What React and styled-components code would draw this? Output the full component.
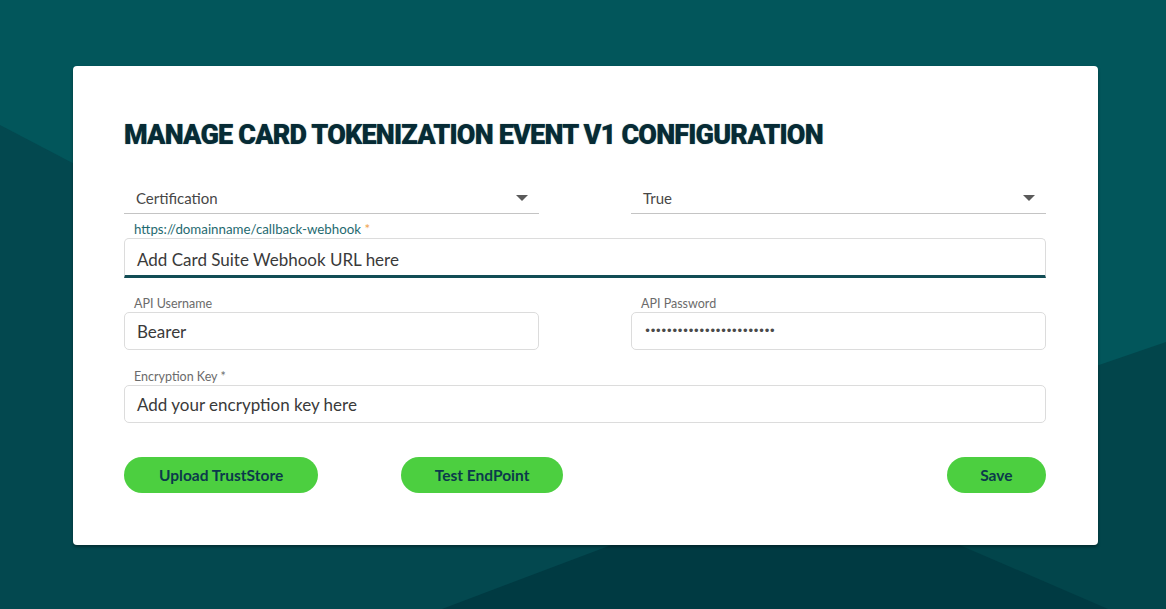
import React from "react";
import styled, { createGlobalStyle } from "styled-components";

const Global = createGlobalStyle`
  html, body { margin: 0; padding: 0; }
  body { font-family: Lato, "Noto Sans", sans-serif; background: #02565b; }
  * { box-sizing: border-box; }
`;

const Page = styled.div`
  position: relative;
  min-height: 100vh;
  padding: 66px 0 0 73px;
  overflow: hidden;
`;

const Backdrop = styled.svg`
  position: absolute;
  inset: 0;
  width: 100%;
  height: 100%;
  z-index: 0;
`;

const Card = styled.section`
  position: relative;
  z-index: 1;
  width: 1025px;
  height: 479px;
  background: #fff;
  border-radius: 4px;
  box-shadow: 0 2px 3px rgba(0, 0, 0, 0.35);
  padding: 51px 52px 52px 51px;
  display: flex;
  flex-direction: column;
`;

const Title = styled.h1`
  margin: 0;
  height: 36px;
  line-height: 36px;
  font-family: Roboto, "Liberation Sans", sans-serif;
  font-weight: 900;
  font-size: 27px;
  letter-spacing: -0.8px;
  color: #062b35;
  text-shadow: 0 0 1px rgba(6, 43, 53, 0.6);
`;

const Row = styled.div`
  display: grid;
  grid-template-columns: 415px 415px;
  justify-content: space-between;
  margin-top: ${(p) => p.$mt || 0}px;
`;

const Select = styled.div`
  height: 31px;
  display: flex;
  align-items: center;
  justify-content: space-between;
  padding: 0 11px 0 12px;
  border-bottom: 1px solid #c4c4c4;
  font-size: 15px;
  color: #474747;
`;

const Caret = styled.span`
  width: 0;
  height: 0;
  border-left: 6px solid transparent;
  border-right: 6px solid transparent;
  border-top: 6px solid #5a5a5a;
`;

const Field = styled.div`
  display: flex;
  flex-direction: column;
  margin-top: ${(p) => p.$mt || 0}px;
`;

const Label = styled.label`
  height: 13px;
  line-height: 13px;
  margin: 0 0 2px 10px;
  font-size: ${(p) => (p.$accent ? 13.3 : 12.5)}px;
  color: ${(p) => (p.$accent ? "#1f6a70" : "#6b6b6b")};
`;

const Star = styled.span`
  color: ${(p) => (p.$orange ? "#f0a24a" : "inherit")};
`;

const Input = styled.div`
  height: ${(p) => (p.$underline ? 40 : 38)}px;
  display: flex;
  align-items: center;
  padding: 0 12px;
  border: 1px solid #dcdcdc;
  border-radius: 5px;
  border-bottom: ${(p) => (p.$underline ? "3px solid #124d55" : "1px solid #dcdcdc")};
  ${(p) => p.$underline && "border-bottom-left-radius: 0; border-bottom-right-radius: 0;"}
  font-size: 17px;
  color: #3a3a3a;
  padding-top: ${(p) => (p.$underline ? 5 : 0)}px;
`;

const Dots = styled.span`
  font-size: 12px;
  letter-spacing: -1.65px;
  color: #4a4a4a;
  font-family: "DejaVu Sans", sans-serif;
`;

const Actions = styled.div`
  display: flex;
  gap: 83px;
  margin-top: 34px;
`;

const Button = styled.button`
  height: 36px;
  padding: 0 ${(p) => p.$px || 34}px;
  border: none;
  border-radius: 18px;
  background: #4ccf40;
  color: #0b3a4b;
  font-family: Lato, "Noto Sans", sans-serif;
  font-weight: 700;
  font-size: 15.5px;
  cursor: pointer;
  margin-left: ${(p) => (p.$push ? "auto" : "0")};
`;

export default function App() {
  return (
    <>
      <Global />
      <Page>
        <Backdrop viewBox="0 0 1166 609" preserveAspectRatio="none">
          <rect x="0" y="0" width="1166" height="609" fill="#02565b" />
          <polygon points="0,125 640,460 640,609 0,609" fill="#03484f" />
          <polygon points="1166,342 1099,365 760,480 760,609 1166,609" fill="#02454b" />
          <polygon points="442,609 797,475 1108,609" fill="#003a42" />
        </Backdrop>
        <Card>
          <Title>MANAGE CARD TOKENIZATION EVENT V1 CONFIGURATION</Title>
          <Row $mt={30}>
            <Select>
              Certification
              <Caret />
            </Select>
            <Select>
              True
              <Caret />
            </Select>
          </Row>
          <Field $mt={9}>
            <Label $accent>
              https://domainname/callback-webhook <Star $orange>*</Star>
            </Label>
            <Input $underline>Add Card Suite Webhook URL here</Input>
          </Field>
          <Row $mt={19}>
            <Field>
              <Label>API Username</Label>
              <Input>Bearer</Input>
            </Field>
            <Field>
              <Label>API Password</Label>
              <Input>
                <Dots>••••••••••••••••••••••••</Dots>
              </Input>
            </Field>
          </Row>
          <Field $mt={20}>
            <Label>
              Encryption Key <Star>*</Star>
            </Label>
            <Input>Add your encryption key here</Input>
          </Field>
          <Actions>
            <Button $px={35}>Upload TrustStore</Button>
            <Button $px={33.5}>Test EndPoint</Button>
            <Button $px={33.5} $push>Save</Button>
          </Actions>
        </Card>
      </Page>
    </>
  );
}
